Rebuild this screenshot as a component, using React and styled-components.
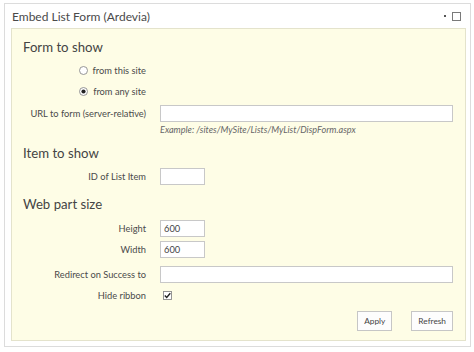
import styled, { createGlobalStyle } from "styled-components";

const GlobalStyle = createGlobalStyle`
body {
margin: 0;
background: #ffffff;
font-family: Lato, "Open Sans", "Liberation Sans", sans-serif;
color: #444444;
}
`

const fields = {
  url: "",
  id: "",
  height: "600",
  width: "600",
  redirect: "",
};

const App = () => {
  return (
    <>
      <GlobalStyle />
      <Panel>
        <TitleBar>
          <Title>Embed List Form (Ardevia)</Title>
          <TitleIcons>
            <Dot />
            <Square />
          </TitleIcons>
        </TitleBar>
        <Editor>
          <Heading top={0}>Form to show</Heading>
          <Row top={3}>
            <Label>
              <Radio />
              from this site
            </Label>
          </Row>
          <Row>
            <Label>
              <Radio checked />
              from any site
            </Label>
          </Row>
          <Row top={1}>
            <Label>URL to form (server-relative)</Label>
            <TextBox defaultValue={fields.url} />
          </Row>
          <Hint>Example: /sites/MySite/Lists/MyList/DispForm.aspx</Hint>

          <Heading top={8}>Item to show</Heading>
          <Row top={3}>
            <Label>ID of List Item</Label>
            <TextBox small defaultValue={fields.id} />
          </Row>

          <Heading top={7}>Web part size</Heading>
          <Row top={4}>
            <Label>Height</Label>
            <TextBox small defaultValue={fields.height} />
          </Row>
          <Row>
            <Label>Width</Label>
            <TextBox small defaultValue={fields.width} />
          </Row>
          <Row top={4}>
            <Label>Redirect on Success to</Label>
            <TextBox defaultValue={fields.redirect} />
          </Row>
          <Row>
            <Label>Hide ribbon</Label>
            <CheckBox />
          </Row>
          <ButtonBar>
            <Button>Apply</Button>
            <Button>Refresh</Button>
          </ButtonBar>
        </Editor>
      </Panel>
    </>
  );
};

const Radio = ({ checked }) => (
  <RadioIcon width="9" height="9" viewBox="0 0 9 9">
    <circle cx="4.5" cy="4.5" r="4" fill="#ffffff" stroke="#8a8a8a" strokeWidth="0.9" />
    {checked && <circle cx="4.5" cy="4.5" r="2.1" fill="#222222" />}
  </RadioIcon>
);

const CheckBox = () => (
  <CheckIcon width="9" height="9" viewBox="0 0 9 9">
    <rect x="0.5" y="0.5" width="8" height="8" fill="#ffffff" stroke="#8a8a8a" strokeWidth="0.9" />
    <path d="M1.8 4.4 L3.7 6.4 L7.3 2.2" fill="none" stroke="#222222" strokeWidth="1.4" />
  </CheckIcon>
);

const Panel = styled.div`
margin: 3px 0 0 4px;
width: 467px;
height: 344px;
box-sizing: border-box;
border: 1px solid #dcdcdc;
padding: 0 4px 5px 6px;
display: flex;
flex-direction: column;
`

const TitleBar = styled.div`
height: 24px;
display: flex;
align-items: center;
justify-content: space-between;
padding: 0 5px 0 1px;
`

const Title = styled.div`
font-size: 12px;
color: #4a4a4a;
`

const TitleIcons = styled.div`
display: flex;
align-items: center;
gap: 6px;
`

const Dot = styled.span`
width: 2px;
height: 2px;
background: #555555;
`

const Square = styled.span`
width: 7px;
height: 7px;
border: 1px solid #7a7a7a;
`

const Editor = styled.div`
flex: 1;
background: #fefde6;
border: 1px solid #e4e3cc;
padding: 8px 11px 9px 11px;
display: flex;
flex-direction: column;
`

const Heading = styled.div`
height: 20px;
line-height: 20px;
margin-top: ${props => props.top}px;
font-size: 13.2px;
color: #444444;
`

const Row = styled.div`
height: 21px;
margin-top: ${props => props.top || 0}px;
display: grid;
grid-template-columns: 123px 1fr;
column-gap: 14px;
align-items: center;
`

const Label = styled.div`
display: flex;
align-items: center;
justify-content: flex-end;
gap: 5px;
font-size: 9.3px;
color: #4a4a4a;
white-space: nowrap;
`

const RadioIcon = styled.svg`
display: block;
`

const CheckIcon = styled.svg`
display: block;
margin-left: 3px;
`

const TextBox = styled.input`
box-sizing: border-box;
width: ${props => (props.small ? "45px" : "293px")};
height: 17px;
border: 1px solid #c8c8c8;
background: #ffffff;
padding: 0 3px;
font-family: inherit;
font-size: 9.3px;
color: #444444;
outline: none;
`

const Hint = styled.div`
height: 11px;
line-height: 11px;
padding-left: 137px;
font-size: 9.1px;
font-style: italic;
color: #666666;
`

const ButtonBar = styled.div`
margin-top: 5px;
height: 20px;
display: flex;
justify-content: flex-end;
gap: 19px;
padding-right: 1px;
`

const Button = styled.button`
height: 20px;
padding: 0 6px;
border: 1px solid #c6c6c6;
background: #fdfdfd;
font-family: inherit;
font-size: 8.3px;
color: #444444;
`

export default App;
